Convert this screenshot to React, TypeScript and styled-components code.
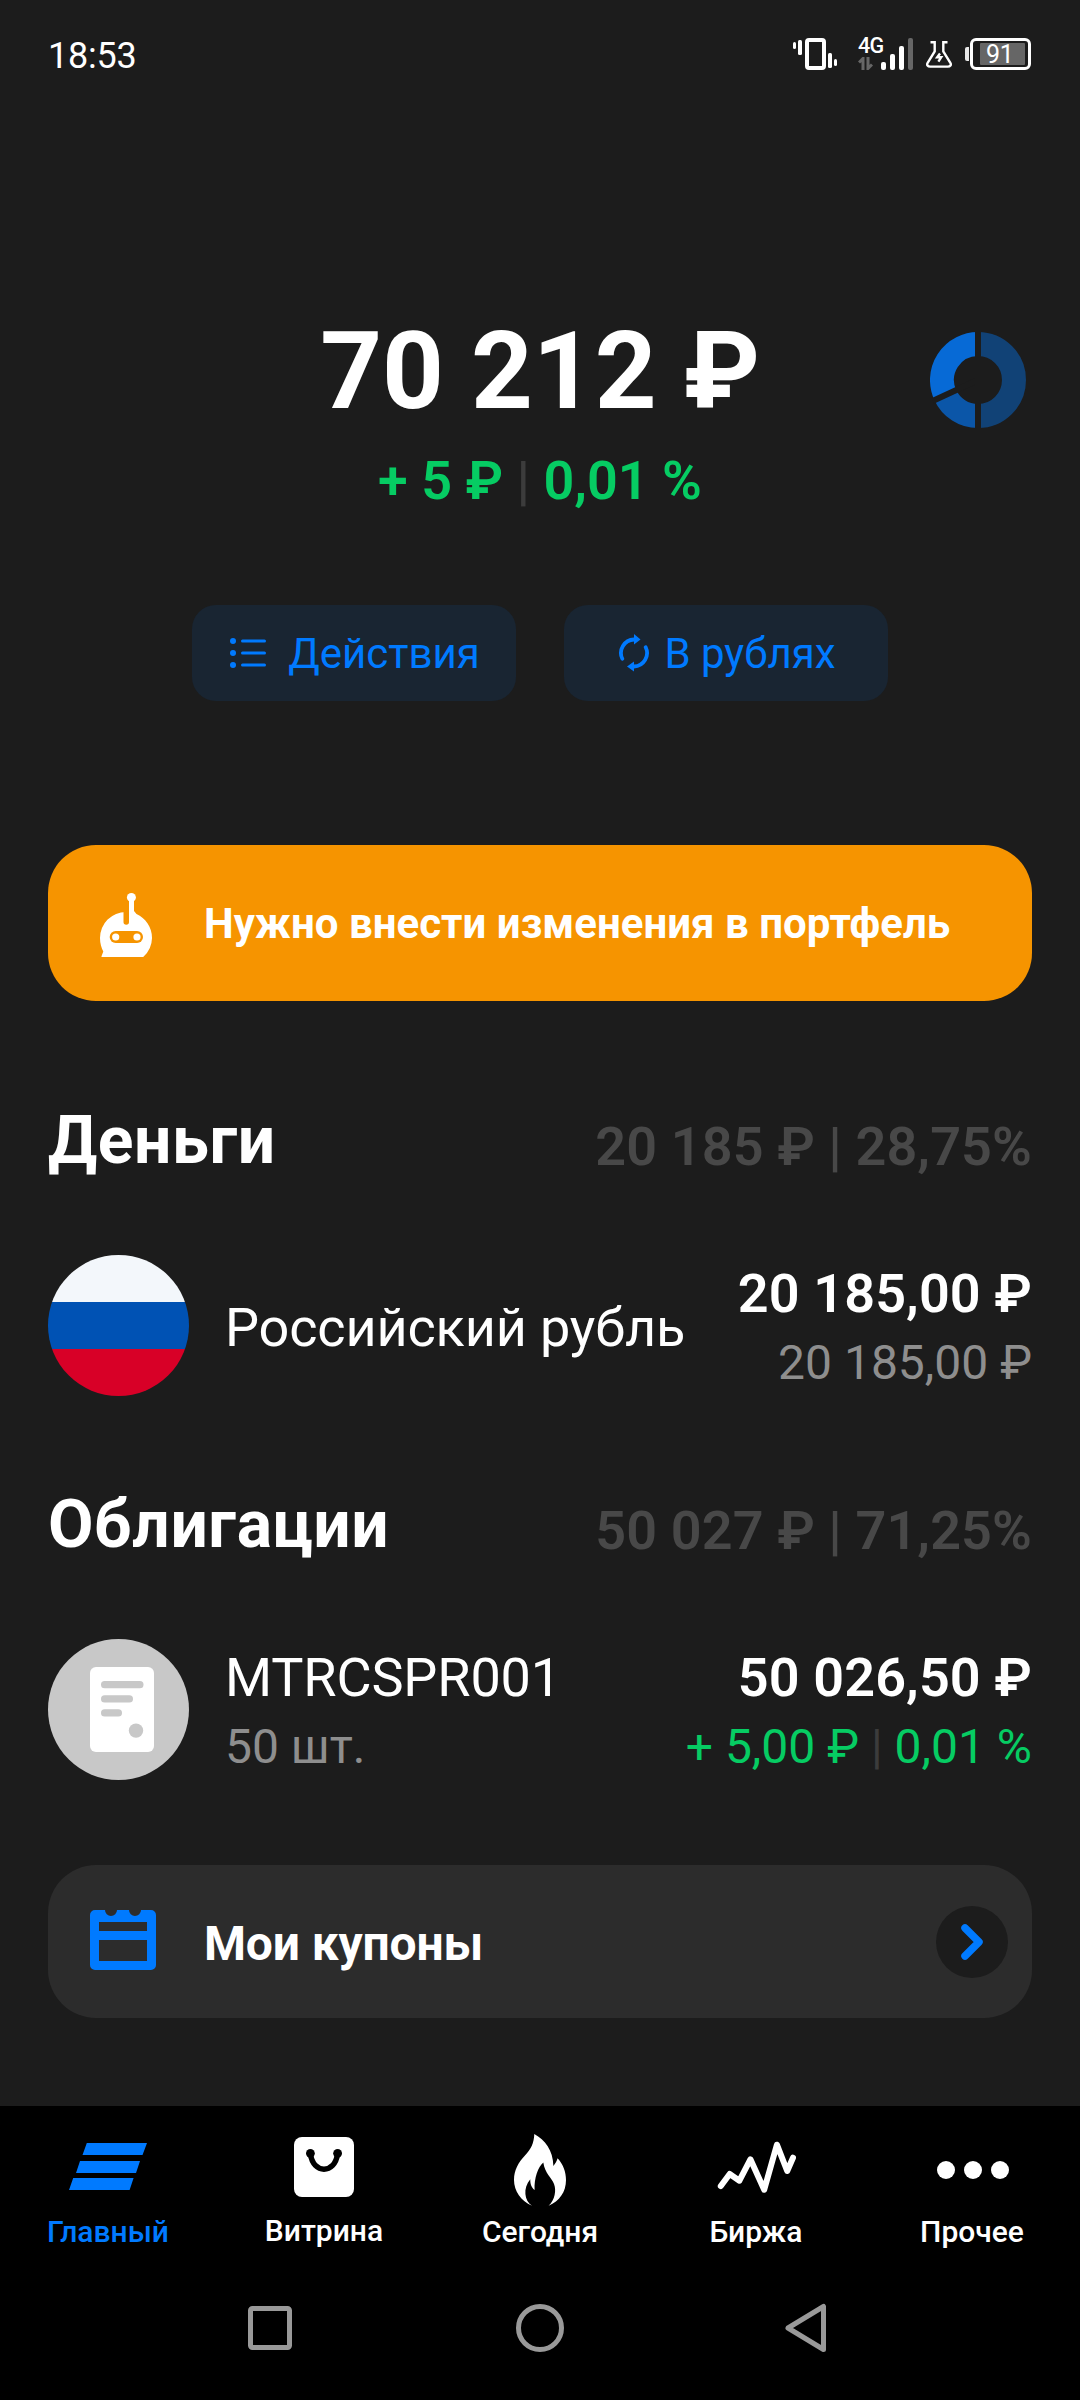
import React from 'react';
import styled, { createGlobalStyle } from 'styled-components';

const color = {
  bg: '#1c1c1c',
  blue: '#007aff',
  green: '#06cc63',
  orange: '#f69400',
  muted: '#8e8e8e',
  faint: '#484848',
};

const GlobalStyle = createGlobalStyle`
  * { box-sizing: border-box; }
  body { margin: 0; background: ${color.bg}; }
  svg { display: block; flex: none; }
`;

const Screen = styled.div`
  width: 1080px;
  height: 2400px;
  display: flex;
  flex-direction: column;
  background: ${color.bg};
  color: #fff;
  font-family: Roboto, 'Noto Sans', sans-serif;
  white-space: pre;
  overflow: hidden;
`;

const StatusBar = styled.header`
  height: 110px;
  display: flex;
  justify-content: space-between;
  padding: 0 49px 0 48px;
`;

const Clock = styled.span`
  font-size: 36px;
  line-height: 112px;
  letter-spacing: -0.2px;
`;

const StatusIcons = styled.div`
  display: flex;
  align-items: flex-start;
  padding-top: 38px;
`;

const NetworkBlock = styled.div`
  width: 56px;
  height: 32px;
  margin-left: 20px;
  display: grid;
  grid-template-columns: 23px 33px;
`;

const NetworkType = styled.span`
  font-size: 21.5px;
  font-weight: 500;
  line-height: 16px;
  letter-spacing: -0.8px;
`;

const NetworkSide = styled.div`
  display: flex;
  flex-direction: column;
  gap: 3px;
`;

const Battery = styled.div`
  display: flex;
  align-items: center;
  margin-left: 13px;
`;

const BatteryTip = styled.div`
  width: 4px;
  height: 14px;
  border-radius: 2px 0 0 2px;
  background: #e8e8e8;
  margin-right: 1px;
`;

const BatteryShell = styled.div`
  width: 61px;
  height: 32px;
  border: 3px solid #fff;
  border-radius: 6px;
  padding: 2px 3px 2px 7px;
`;

const BatteryFill = styled.div`
  height: 22px;
  background: #666;
  border-radius: 1px;
  font-size: 25px;
  line-height: 23px;
  padding-left: 6px;
  letter-spacing: -0.2px;
`;

const Main = styled.main`
  flex: 1;
  padding: 0 48px;
  display: flex;
  flex-direction: column;
`;

const Summary = styled.section`
  display: grid;
  grid-template-columns: 1fr 492px 1fr;
  padding-top: 201px;
`;

const Totals = styled.div`
  grid-column: 2;
  display: flex;
  flex-direction: column;
  align-items: center;
`;

const Total = styled.div`
  font-size: 108px;
  font-weight: 700;
  line-height: 120px;
`;

const TotalChange = styled.div`
  margin-top: 18px;
  font-size: 54px;
  font-weight: 600;
  line-height: 64px;
  color: ${color.green};
`;

const Divider = styled.span`
  color: #3c3c3c;
`;

const DonutSlot = styled.div`
  display: flex;
  justify-content: flex-end;
  padding: 21px 6px 0 0;
`;

const Actions = styled.div`
  display: flex;
  justify-content: center;
  gap: 48px;
  margin-top: 92px;
`;

const ActionButton = styled.button<{ $gap: number }>`
  width: 324px;
  height: 96px;
  border: 0;
  border-radius: 24px;
  background: #192532;
  color: ${color.blue};
  font: 400 42px/98px Roboto, 'Noto Sans', sans-serif;
  display: flex;
  align-items: center;
  justify-content: center;
  gap: ${(p) => p.$gap}px;
  padding: 0 0 0 2px;
`;

const ActionLabel = styled.span`
  padding-top: 2px;
`;

const Banner = styled.div`
  height: 156px;
  margin-top: 144px;
  border-radius: 48px;
  background: ${color.orange};
  display: flex;
  align-items: center;
  padding: 2px 0 0 48px;
  gap: 48px;
`;

const BannerText = styled.span`
  font-size: 42px;
  font-weight: 700;
  line-height: 60px;
  letter-spacing: 0.03px;
`;

const Group = styled.section<{ $top: number }>`
  margin-top: ${(p) => p.$top}px;
`;

const GroupHead = styled.div`
  display: flex;
  justify-content: space-between;
  align-items: flex-start;
  height: 80px;
`;

const GroupTitle = styled.h2`
  margin: 0;
  font-size: 66px;
  font-weight: 700;
  line-height: 82px;
  letter-spacing: 0.6px;
`;

const GroupShare = styled.span`
  padding-top: 15px;
  font-size: 54px;
  font-weight: 600;
  line-height: 64px;
  letter-spacing: 0.1px;
  color: ${color.faint};
`;

const AssetRow = styled.div`
  display: flex;
  align-items: center;
  height: 141px;
  margin-top: 75px;
`;

const Flag = styled.div`
  width: 141px;
  height: 141px;
  flex: none;
  border-radius: 50%;
  overflow: hidden;
  background: linear-gradient(#f3f7fb 0 47px, #0052b4 47px 94px, #d80027 94px);
`;

const AssetName = styled.div<{ $drop: number }>`
  flex: 1;
  margin-left: 36px;
  padding-top: ${(p) => p.$drop}px;
  font-size: 54px;
  line-height: 69px;
  letter-spacing: -0.15px;
`;

const AssetSum = styled.div`
  padding-top: 4px;
  text-align: right;
  font-size: 54px;
  font-weight: 600;
  line-height: 69px;
  letter-spacing: 0.1px;
`;

const SubLine = styled.div<{ $tone?: string }>`
  font-size: 48px;
  font-weight: 400;
  line-height: 69px;
  letter-spacing: 0;
  color: ${(p) => p.$tone ?? color.muted};
`;

const CouponCard = styled.div`
  height: 153px;
  margin-top: 85px;
  border-radius: 48px;
  background: #2c2c2c;
  display: flex;
  align-items: center;
  padding: 0 24px 0 42px;
`;

const CouponText = styled.span`
  flex: 1;
  margin-left: 48px;
  padding-top: 4px;
  font-size: 48px;
  font-weight: 700;
  line-height: 60px;
  letter-spacing: -0.15px;
`;

const ArrowCircle = styled.div`
  width: 72px;
  height: 72px;
  border-radius: 50%;
  background: ${color.bg};
  display: flex;
  align-items: center;
  justify-content: center;
`;

const TabBar = styled.nav`
  height: 174px;
  background: #000;
  display: grid;
  grid-template-columns: repeat(5, 1fr);
  padding-top: 24px;
`;

const Tab = styled.div<{ $active?: boolean; $gap?: number }>`
  display: flex;
  flex-direction: column;
  align-items: center;
  font-size: 30px;
  font-weight: 500;
  line-height: 40px;
  gap: ${(p) => p.$gap ?? 2}px;
  color: ${(p) => (p.$active ? color.blue : '#fff')};
`;

const SystemBar = styled.footer`
  height: 120px;
  background: #000;
  display: flex;
  justify-content: center;
  gap: 218px;
  padding-top: 22px;
`;

const VibrateIcon = () => (
  <svg width="45" height="32" viewBox="0 0 45 32" fill="#fff">
    <rect x="0" y="4" width="3" height="7" rx="1.5" />
    <rect x="5" y="2" width="4" height="15" rx="1.5" />
    <rect x="14" y="2" width="17" height="28" rx="2" fill="none" stroke="#fff" strokeWidth="4" />
    <rect x="35" y="15" width="4" height="15" rx="1.5" />
    <rect x="41" y="21" width="3" height="7" rx="1.5" />
  </svg>
);

const DataArrows = () => (
  <svg width="15" height="13" viewBox="0 0 15 13" fill="none" stroke="#666" strokeWidth="3">
    <path d="M5 13V1.5L1 5.5M10 0v11.5l4-4" />
  </svg>
);

const SignalIcon = () => (
  <svg width="33" height="32" viewBox="0 0 33 32" fill="#fff">
    <rect x="0" y="24" width="5" height="8" rx="2" />
    <rect x="9" y="16" width="5" height="16" rx="2" />
    <rect x="18" y="8" width="5" height="24" rx="2" />
    <rect x="27" y="0" width="5" height="32" rx="2" fill="#666" />
  </svg>
);

const FlaskSvg = styled.svg`
  margin: 3px 0 0 12px;
`;

const FlaskIcon = () => (
  <FlaskSvg width="26" height="27" viewBox="0 0 26 27" fill="none" stroke="#fff" strokeWidth="2.4">
    <path d="M4.5 1.2h4.2v9.3L1.8 21.5c-1.6 2.7.1 4.1 2.4 4.1h17.600c2.3 0 4-1.400 2.4-4.1L17.3 10.500V1.2h4.2" />
    <path d="M14 12.500l-2.800 3.800h4l-2.800 4.400" />
  </FlaskSvg>
);

const DonutChart = () => (
  <svg width="96" height="96" viewBox="0 0 96 96" fill="none" strokeWidth="24">
    <path d="M48 12a36 36 0 0 1 0 72" stroke="#114276" />
    <path d="M48 84a36 36 0 0 1-32.7-20.9" stroke="#0b56a8" />
    <path d="M15.3 63.1A36 36 0 0 1 48 12" stroke="#076ad6" />
    <path d="M48-1V97M48 48L2.6 69" stroke={color.bg} strokeWidth="6" />
  </svg>
);

const ListIcon = () => (
  <svg width="36" height="30" viewBox="0 0 36 30" fill={color.blue}>
    {[3, 15, 27].map((y) => (
      <g key={y}>
        <circle cx="3" cy={y} r="3" />
        <rect x="11" y={y - 1.5} width="25" height="3" rx="1.5" />
      </g>
    ))}
  </svg>
);

const RefreshIcon = () => (
  <svg width="32" height="38" viewBox="0 0 32 38" fill="none" stroke={color.blue} strokeWidth="3.8" strokeLinecap="round">
    <path d="M4.3 24.8A13.5 13.5 0 0 1 16 5.5" />
    <path d="M27.7 13.2A13.5 13.5 0 0 1 16 32.5" />
    <path d="M16 0l6.5 5.5L16 10.5z" fill={color.blue} stroke="none" />
    <path d="M16 27.5v10l-7-5z" fill={color.blue} stroke="none" />
  </svg>
);

const RobotIcon = () => (
  <svg width="60" height="66" viewBox="0 0 60 66" fill="#fff">
    <g transform="translate(0 -1)">
      <path d="M30 21a26 26 0 0 0-26 26c0 5.5 1.5 10 3.3 13.6L5.600 65c-.4 1.300.1 2 1.400 2h37.500c1.300 0 2-.4 2.700-1A26 26 0 0 0 56 47c0-11-6.500-20-15.500-24L38 20V6h-5v15z" transform="translate(0 1)" />
      <path d="M27.500 19h5.500v13a2.750 2.750 0 0 1-5.500 0z" fill={color.orange} />
      <circle cx="35.400" cy="7.400" r="4.500" />
      <rect x="13.700" y="41" width="33.300" height="12" rx="6" fill={color.orange} />
      <circle cx="19.700" cy="47" r="3.600" />
      <circle cx="41" cy="47" r="3.600" />
    </g>
  </svg>
);

const BondIcon = () => (
  <svg width="141" height="141" viewBox="0 0 141 141" fill="#c8c8c8">
    <circle cx="70.500" cy="70.500" r="70.500" />
    <rect x="42" y="28" width="64" height="85" rx="6" fill="#fff" />
    <rect x="53" y="42" width="42.500" height="7.300" rx="3.600" />
    <rect x="53" y="56.300" width="32" height="7.300" rx="3.600" />
    <rect x="53" y="70.300" width="21" height="7.300" rx="3.600" />
    <circle cx="88" cy="91.600" r="7.200" />
  </svg>
);

const CouponIcon = () => (
  <svg width="66" height="63" viewBox="0 0 66 63" fill={color.blue} fillRule="evenodd">
    <path d="M5 0h10a6 6 0 0 0 12 0h12a6 6 0 0 0 12 0h10a5 5 0 0 1 5 5v50a5 5 0 0 1-5 5H5a5 5 0 0 1-5-5V5a5 5 0 0 1 5-5zM9 12v9h48v-9zM9 30v21h48V30z" />
  </svg>
);

const ChevronIcon = () => (
  <svg width="36" height="40" viewBox="0 0 36 40" fill="none" stroke={color.blue} strokeWidth="7.5" strokeLinecap="round" strokeLinejoin="round">
    <path d="M11 6l14 14-14 14" />
  </svg>
);

const HomeIcon = () => (
  <svg width="80" height="80" viewBox="0 0 80 80" fill={color.blue}>
    <path d="M18.800 13h60.200l-4.500 12H14.500zM12 31h60l-4 12H8zM5.200 48h60.400l-4 12H1z" />
  </svg>
);

const BagIcon = () => (
  <svg width="80" height="80" viewBox="0 0 80 80">
    <rect x="10" y="7" width="60" height="60" rx="8" fill="#fff" />
    <circle cx="26.400" cy="23.300" r="4.400" />
    <circle cx="53.600" cy="23.300" r="4.400" />
    <path d="M26.500 24C29 44.200 51 44.200 53.500 24" fill="none" stroke="#000" strokeWidth="5.500" />
  </svg>
);

const FlameIcon = () => (
  <svg width="80" height="80" viewBox="0 0 80 80" fill="#fff">
    <path d="M34.300 4C45 10 53 20 53.400 36c2-2.500 3.400-5 4.200-7.700C63 34 66 42 66 50c0 12-6.500 21-17.400 25.700C55 70 56.500 60 54 54c-2-6-9-10-10.700-21.500C38 37 34 48 34.600 60c-3.400-2.500-4.500-6.500-4.300-10.700-3.800 4.700-5.300 9.700-4.900 14.700.3 4.800 2.600 9 6.600 11.700C21 71 14 61 14 50c0-10 4.500-17.500 10.500-24C31 19.500 34 13 34.300 4z" />
  </svg>
);

const ExchangeIcon = () => (
  <svg width="80" height="80" viewBox="0 0 80 80" fill="none" stroke="#fff" strokeWidth="6" strokeLinecap="round" strokeLinejoin="round">
    <path d="M4.800 56L13.700 44 23.400 50.700 34.400 29.300 48.200 59.700 60.900 14.700 71.200 41 77 27.700" />
  </svg>
);

const MoreIcon = () => (
  <svg width="80" height="80" viewBox="0 0 80 80" fill="#fff">
    <circle cx="14" cy="40" r="9" />
    <circle cx="41" cy="40" r="9" />
    <circle cx="68" cy="40" r="9" />
  </svg>
);

const tabs = [
  { label: 'Главный', Icon: HomeIcon, active: true },
  { label: 'Витрина', Icon: BagIcon, gap: 1 },
  { label: 'Сегодня', Icon: FlameIcon },
  { label: 'Биржа', Icon: ExchangeIcon },
  { label: 'Прочее', Icon: MoreIcon },
];

export default function App() {
  return (
    <Screen>
      <GlobalStyle />
      <StatusBar>
        <Clock>18:53</Clock>
        <StatusIcons>
          <VibrateIcon />
          <NetworkBlock>
            <NetworkSide>
              <NetworkType>4G</NetworkType>
              <DataArrows />
            </NetworkSide>
            <SignalIcon />
          </NetworkBlock>
          <FlaskIcon />
          <Battery>
            <BatteryTip />
            <BatteryShell>
              <BatteryFill>91</BatteryFill>
            </BatteryShell>
          </Battery>
        </StatusIcons>
      </StatusBar>

      <Main>
        <Summary>
          <Totals>
            <Total>70 212 ₽</Total>
            <TotalChange>
              + 5 ₽ <Divider>|</Divider> 0,01 %
            </TotalChange>
          </Totals>
          <DonutSlot>
            <DonutChart />
          </DonutSlot>
        </Summary>

        <Actions>
          <ActionButton $gap={22}>
            <ListIcon />
            <ActionLabel>Действия</ActionLabel>
          </ActionButton>
          <ActionButton $gap={14}>
            <RefreshIcon />
            <ActionLabel>В рублях</ActionLabel>
          </ActionButton>
        </Actions>

        <Banner>
          <RobotIcon />
          <BannerText>Нужно внести изменения в портфель</BannerText>
        </Banner>

        <Group $top={99}>
          <GroupHead>
            <GroupTitle>Деньги</GroupTitle>
            <GroupShare>20 185 ₽ | 28,75%</GroupShare>
          </GroupHead>
          <AssetRow>
            <Flag />
            <AssetName $drop={3}>Российский рубль</AssetName>
            <AssetSum>
              20 185,00 ₽
              <SubLine>20 185,00 ₽</SubLine>
            </AssetSum>
          </AssetRow>
        </Group>

        <Group $top={88}>
          <GroupHead>
            <GroupTitle>Облигации</GroupTitle>
            <GroupShare>50 027 ₽ | 71,25%</GroupShare>
          </GroupHead>
          <AssetRow>
            <BondIcon />
            <AssetName $drop={5}>
              MTRCSPR001
              <SubLine>50 шт.</SubLine>
            </AssetName>
            <AssetSum>
              50 026,50 ₽
              <SubLine $tone={color.green}>
                + 5,00 ₽ <Divider>|</Divider> 0,01 %
              </SubLine>
            </AssetSum>
          </AssetRow>
        </Group>

        <CouponCard>
          <CouponIcon />
          <CouponText>Мои купоны</CouponText>
          <ArrowCircle>
            <ChevronIcon />
          </ArrowCircle>
        </CouponCard>
      </Main>

      <TabBar>
        {tabs.map(({ label, Icon, active, gap }) => (
          <Tab key={label} $active={active} $gap={gap}>
            <Icon />
            {label}
          </Tab>
        ))}
      </TabBar>

      <SystemBar>
        <svg width="52" height="56" viewBox="0 0 52 56" fill="none" stroke="#999" strokeWidth="5">
          <rect x="6.500" y="6.500" width="39" height="39" rx="2" />
        </svg>
        <svg width="52" height="56" viewBox="0 0 52 56" fill="none" stroke="#999" strokeWidth="5">
          <circle cx="26" cy="26" r="21.500" />
        </svg>
        <svg width="52" height="56" viewBox="0 0 52 56" fill="none" stroke="#999" strokeWidth="5" strokeLinejoin="round">
          <path d="M39.500 4.500v43L4 26z" />
        </svg>
      </SystemBar>
    </Screen>
  );
}
